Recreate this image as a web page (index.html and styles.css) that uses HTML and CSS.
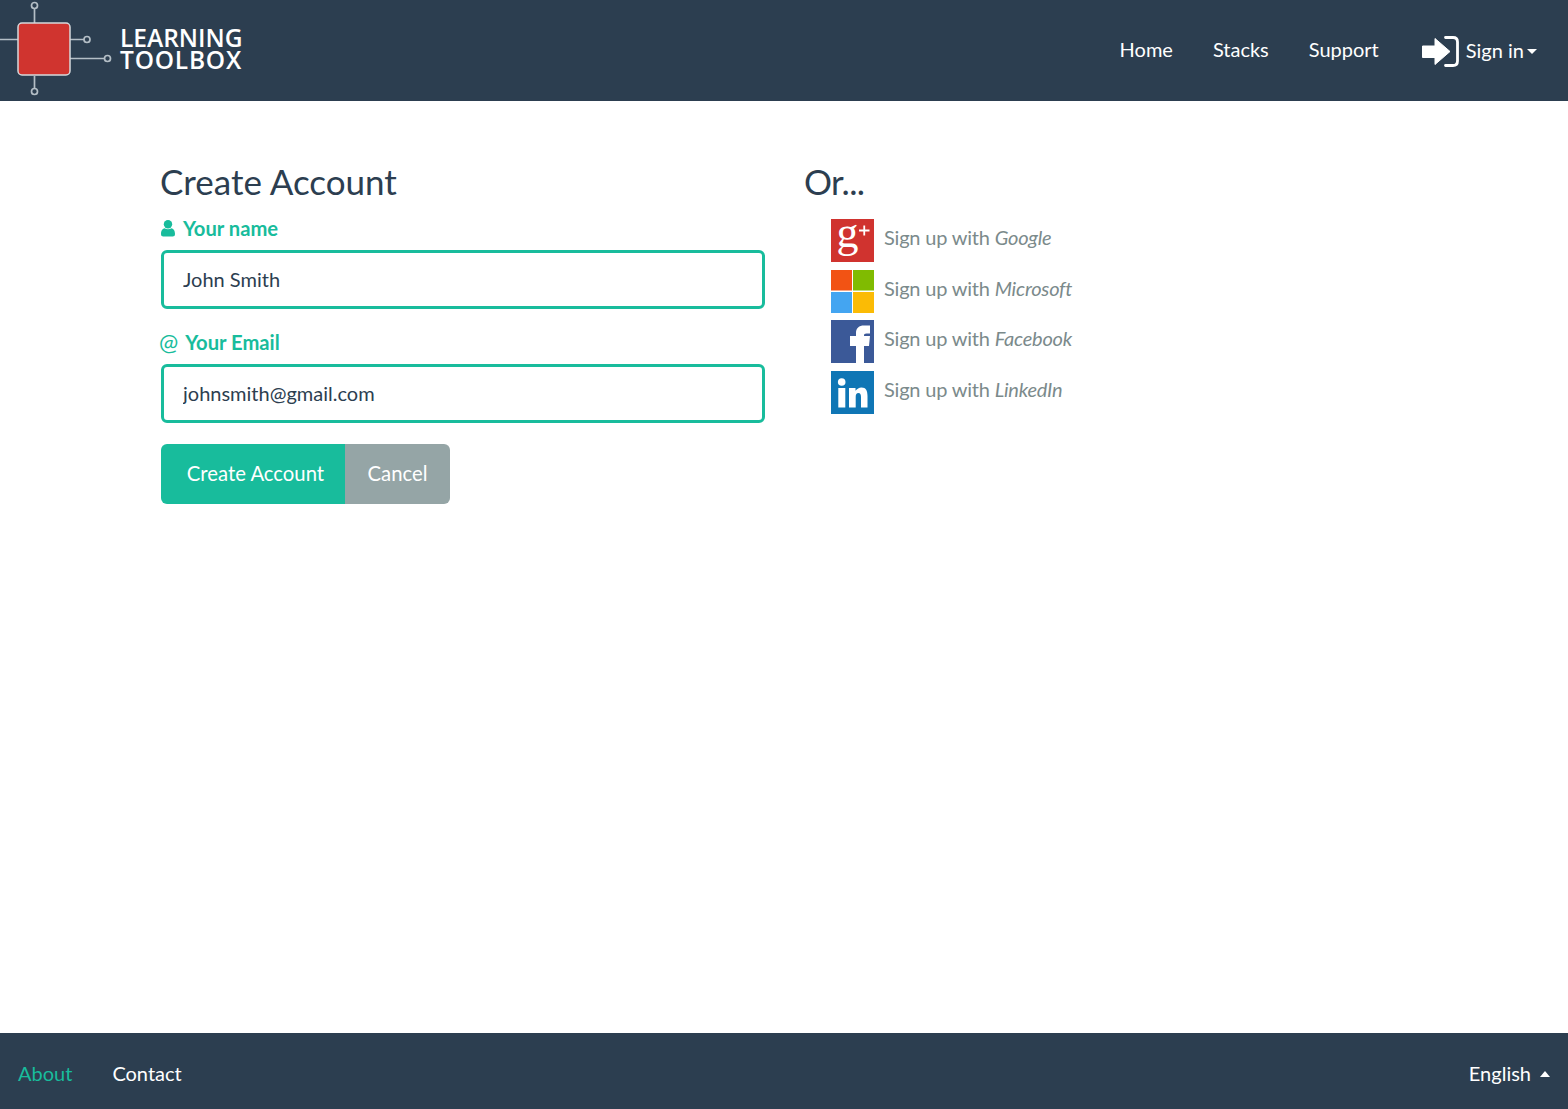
FILE: index.html
```html
<!DOCTYPE html>
<html lang="en">
<head>
<meta charset="utf-8">
<title>Learning Toolbox</title>
<link rel="stylesheet" href="styles.css">
</head>
<body>
<header class="navbar">
  <a class="brand" href="#">
    <svg class="logo" width="113" height="101" viewBox="0 0 113 101" aria-hidden="true">
      <g fill="none" stroke="#b4bec6" stroke-width="1.700">
        <path d="M34.500 8V23M34.500 76V88.500M0 39.500H18M70 39.500H84M70 58.500H104.500"/>
        <circle cx="34.500" cy="5.500" r="3"/>
        <circle cx="34.500" cy="91.500" r="3"/>
        <circle cx="87" cy="39.500" r="3"/>
        <circle cx="107.500" cy="58.500" r="3"/>
      </g>
      <rect x="18" y="23" width="52" height="52" rx="4" fill="#d0342f" stroke="#d5d9dc" stroke-width="1.500"/>
    </svg>
    <span class="brand-text"><span>LEARNING</span><span class="brand-second">TOOLBOX</span></span>
  </a>
  <nav class="nav-links">
    <a href="#">Home</a>
    <a href="#">Stacks</a>
    <a href="#">Support</a>
    <a href="#" class="signin">
      <svg width="37" height="31" viewBox="0 0 37 31" aria-hidden="true">
        <path fill="#fff" stroke="#fff" stroke-linejoin="round" stroke-width="1" d="M.500 10H13V2.500L28 15.500 13 28.500V21.500H.500Z"/>
        <path fill="none" stroke="#fff" stroke-width="2.800" stroke-linecap="round" d="M23.500 1.500H31Q35.500 1.500 35.500 6V25Q35.500 29.500 31 29.500H23.500"/>
      </svg>
      <span>Sign in</span><i class="caret"></i>
    </a>
  </nav>
</header>

<main class="content">
  <section class="col-form">
    <h2 class="form-title">Create Account</h2>
    <form>
      <label class="field-label" for="name">
        <svg width="14" height="17" viewBox="0 0 14 17" aria-hidden="true"><circle cx="7" cy="4.200" r="4.200" fill="#18bc9c"/><path fill="#18bc9c" d="M0 14C0 10 2 8.500 3.500 8.200 5.500 9.600 8.500 9.600 10.500 8.200 12 8.500 14 10 14 14 14 15.800 13 16.500 11.800 16.500H2.200C1 16.500 0 15.800 0 14Z"/></svg>
        Your name
      </label>
      <input id="name" class="field" type="text" value="John Smith">
      <label class="field-label email-label" for="email">
        <span class="at">@</span>
        Your Email
      </label>
      <input id="email" class="field" type="text" value="johnsmith@gmail.com">
      <div class="btn-group">
        <button type="button" class="btn btn-primary">Create Account</button>
        <button type="button" class="btn btn-cancel">Cancel</button>
      </div>
    </form>
  </section>
  <section class="col-social">
    <h2 class="or-title">Or...</h2>
    <ul class="social">
      <li>
        <svg class="ico" viewBox="0 0 43 43" aria-hidden="true"><rect width="43" height="43" fill="#d0332f"/><text x="5.500" y="28" class="gplus-g">g</text><path d="M28 11.500h10.500M33.250 6.500v10" stroke="#fff" stroke-width="1.800" fill="none"/></svg>
        <span>Sign up with <em>Google</em></span>
      </li>
      <li>
        <svg class="ico" viewBox="0 0 43 43" aria-hidden="true"><rect width="21" height="20.500" fill="#f25314"/><rect x="22" width="21" height="20.500" fill="#80bb01"/><rect y="22" width="21" height="21" fill="#44a5f1"/><rect x="22" y="22" width="21" height="21" fill="#fbbb05"/></svg>
        <span>Sign up with <em>Microsoft</em></span>
      </li>
      <li>
        <svg class="ico" viewBox="0 0 43 43" aria-hidden="true"><rect width="43" height="43" fill="#3b5998"/><path fill="#fff" d="M25 43V26H19V16H25V13C25 8 28 5.500 33 5.500H39V13.500H35.500C33.500 13.500 33 14.200 33 15.500V16H39L38 26H33V43Z"/></svg>
        <span>Sign up with <em>Facebook</em></span>
      </li>
      <li>
        <svg class="ico" viewBox="0 0 43 43" aria-hidden="true"><rect width="43" height="43" fill="#0f76b5"/><circle cx="10.700" cy="11" r="3.800" fill="#fff"/><rect x="7.300" y="17" width="7" height="19.500" fill="#fff"/><path fill="#fff" d="M18 17H24.500V19.800C26 17.800 28 16.500 30.500 16.500 35 16.500 36.500 19.800 36.500 25V36.500H30V26C30 23.500 29.200 22 27.500 22 25.500 22 24.700 23.500 24.700 26V36.500H18Z"/></svg>
        <span>Sign up with <em>LinkedIn</em></span>
      </li>
    </ul>
  </section>
</main>

<footer class="footer">
  <a href="#" class="active">About</a>
  <a href="#">Contact</a>
  <a href="#" class="lang">English<i class="caret-up"></i></a>
</footer>
</body>
</html>
```

FILE: styles.css
```css
* { box-sizing: border-box; }
html, body { height: 100%; }
body {
  margin: 0;
  min-height: 1109px;
  display: flex;
  flex-direction: column;
  font-family: Lato, "Liberation Sans", sans-serif;
  font-size: 20px;
  color: #2c3e50;
  background: #fff;
}
a { color: inherit; text-decoration: none; }

.navbar {
  height: 101px;
  flex: none;
  display: flex;
  align-items: center;
  justify-content: space-between;
  background: #2c3e50;
  color: #fff;
  padding-right: 31px;
}
.brand { display: flex; align-items: center; height: 101px; }
.logo { display: block; }
.brand-text {
  display: flex;
  flex-direction: column;
  margin-left: 7px;
  margin-top: -4px;
  font-family: "Open Sans", sans-serif;
  font-weight: 600;
  font-size: 24.500px;
  line-height: 21.500px;
}
.brand-second { letter-spacing: 0.800px; }
.nav-links { display: flex; align-items: center; gap: 40px; margin-top: -4px; }
.signin { display: flex; align-items: center; margin-left: 3px; margin-top: 2px; }
.signin svg { margin-right: 7px; margin-top: 4px; }
.caret {
  display: inline-block;
  width: 0;
  height: 0;
  margin-left: 3px;
  margin-top: 3px;
  border-left: 5.500px solid transparent;
  border-right: 5.500px solid transparent;
  border-top: 5px solid #fff;
}

.content {
  flex: 1;
  display: flex;
  gap: 40px;
  padding: 56px 0 0 161px;
}
.col-form { width: 604px; }
h2 {
  margin: 0 0 12px;
  font-size: 35px;
  font-weight: 400;
  line-height: 48px;
  padding-bottom: 2px;
}
.form-title { margin: 0 0 7px -1px; }
.or-title { margin-left: -1px; letter-spacing: -0.700px; }
.field-label {
  display: flex;
  align-items: center;
  gap: 8px;
  height: 30px;
  padding-bottom: 2px;
  margin-bottom: 6px;
  color: #18bc9c;
  font-weight: 700;
  font-size: 20.200px;
}
.email-label { margin-top: 19px; gap: 7px; }
.at { margin-left: -2px; font-weight: 400; font-size: 23px; }
.field {
  display: block;
  width: 100%;
  height: 59px;
  padding: 0 19px 2px;
  border: 3px solid #18bc9c;
  border-radius: 6px;
  outline: none;
  color: #2c3e50;
  font: 400 20px Lato, sans-serif;
}
.btn-group { display: flex; margin-top: 21px; }
.btn {
  height: 59.500px;
  border: 0;
  padding: 0 0 2px;
  color: #fff;
  white-space: nowrap;
  font: 400 20.300px Lato, sans-serif;
}
.btn-primary { width: 184px; padding-left: 5px; background: #18bc9c; border-radius: 6px 0 0 6px; }
.btn-cancel { width: 105px; background: #95a5a6; border-radius: 0 6px 6px 0; }

.social { list-style: none; margin: 0; padding: 0 0 0 26px; color: #7b8a8b; letter-spacing: -0.200px; }
.social li { display: flex; align-items: flex-start; gap: 10px; height: 50.500px; }
.ico { width: 43px; height: 43px; display: block; flex: none; }
.social span { line-height: 37px; }
.gplus-g { font-family: "Liberation Serif", serif; font-size: 44px; fill: #fff; }

.footer {
  height: 76px;
  flex: none;
  display: flex;
  align-items: center;
  gap: 40px;
  padding: 3px 18px 0;
  background: #2c3e50;
  color: #fff;
}
.footer .active { color: #18bc9c; }
.lang { margin-left: auto; display: flex; align-items: center; }
.caret-up {
  display: inline-block;
  width: 0;
  height: 0;
  margin-left: 9px;
  margin-top: 2px;
  border-left: 5.500px solid transparent;
  border-right: 5.500px solid transparent;
  border-bottom: 6px solid #fff;
}
```
